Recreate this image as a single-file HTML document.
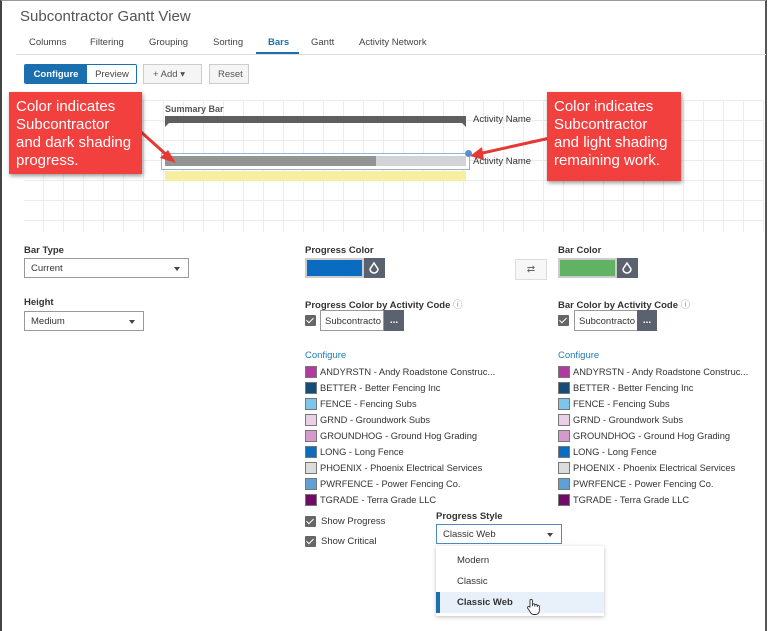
<!DOCTYPE html>
<html><head><style>
*{margin:0;padding:0;box-sizing:border-box}
body{width:768px;height:631px;background:#fff;font-family:"Liberation Sans",sans-serif;color:#333;position:relative;overflow:hidden;font-size:10px}
.a{position:absolute}
.border{position:absolute;left:0;top:0;width:767px;height:631px;border-left:2px solid #444;border-right:2px solid #555;border-top:1px solid #999}
.tab{position:absolute;top:37px;font-size:9.5px;color:#444}
.grid{position:absolute;left:24px;top:100px;width:740px;height:132px;
background-image:linear-gradient(to right,#ececec 1px,transparent 1px),linear-gradient(to bottom,#ececec 1px,transparent 1px);
background-size:20px 20px;background-position:19px 0,0 0}
.callout{position:absolute;background:#f2403f;color:#fff;font-size:15px;line-height:18px;padding:6px 7px;box-shadow:1px 2px 4px rgba(0,0,0,.4)}
.lbl{position:absolute;font-size:9.5px;font-weight:bold;color:#333}
.sel{position:absolute;height:20px;border:1px solid #999;background:#fff;font-size:9.5px;padding:4px 6px;color:#333}
.sel:after{content:"";position:absolute;right:8px;top:8px;border-left:3px solid transparent;border-right:3px solid transparent;border-top:4px solid #444}
.item{position:absolute;font-size:9.3px;color:#333;height:12px;line-height:12px;white-space:nowrap}
.sw{display:inline-block;width:12px;height:12px;vertical-align:top;margin-right:3px;border:1px solid #777}
.cb{position:absolute;width:11px;height:11px;background:#666;border-radius:1px}
.cb:after{content:"";position:absolute;left:3px;top:1px;width:3px;height:6px;border:solid #fff;border-width:0 1.5px 1.5px 0;transform:rotate(45deg)}
.pick{position:absolute;width:21px;height:20px;background:#5a6270}
</style></head><body>
<div class="border"></div>
<div class="a" style="left:20px;top:8px;font-size:15px;color:#555">Subcontractor Gantt View</div>
<div class="tab" style="left:29px">Columns</div>
<div class="tab" style="left:90px">Filtering</div>
<div class="tab" style="left:149px">Grouping</div>
<div class="tab" style="left:213px">Sorting</div>
<div class="tab" style="left:268px;color:#1a6fae;font-weight:bold">Bars</div>
<div class="tab" style="left:311px">Gantt</div>
<div class="tab" style="left:359px">Activity Network</div>
<div class="a" style="left:16px;top:54px;width:750px;height:1px;background:#ddd"></div>
<div class="a" style="left:256px;top:52px;width:43px;height:2px;background:#1a6fae"></div>
<div class="a" style="left:24px;top:64px;width:113px;height:20px;border:1px solid #1a6fae;border-radius:2px;overflow:hidden">
 <div class="a" style="left:0;top:0;width:62px;height:18px;background:#1a6fae;color:#fff;font-weight:bold;font-size:9.5px;padding-top:4px;text-align:center">Configure</div>
 <div class="a" style="left:62px;top:0;width:50px;height:18px;color:#444;font-size:9.5px;padding-top:4px;text-align:center">Preview</div>
</div>
<div class="a" style="left:143px;top:64px;width:59px;height:20px;border:1px solid #ccc;background:#f5f5f5;font-size:9.5px;color:#555;padding:4px 0 0 9px">+ Add ▾</div>
<div class="a" style="left:209px;top:64px;width:40px;height:20px;border:1px solid #ccc;background:#f5f5f5;font-size:9.5px;color:#555;padding:4px 0 0 8px">Reset</div>

<div class="grid"></div>
<div class="a" style="left:165px;top:104px;font-size:9px;font-weight:bold;color:#555">Summary Bar</div>
<div class="a" style="left:165px;top:116px;width:301px;height:7px;background:#5f5f5f"></div>
<div class="a" style="left:165px;top:123px;width:0;height:0;border-top:4px solid #5f5f5f;border-right:4px solid transparent"></div>
<div class="a" style="left:462px;top:123px;width:0;height:0;border-top:4px solid #5f5f5f;border-left:4px solid transparent"></div>
<div class="a" style="left:473px;top:114px;font-size:9.5px;color:#333">Activity Name</div>
<div class="a" style="left:161px;top:153px;width:309px;height:17px;border:1px solid #8fb6d6;background:#fff"></div>
<div class="a" style="left:165px;top:156px;width:301px;height:10px;background:#d3d3d7"></div>
<div class="a" style="left:165px;top:156px;width:211px;height:10px;background:#949494"></div>
<div class="a" style="left:465px;top:150px;width:7px;height:7px;border-radius:50%;background:#5b8fd0"></div>
<div class="a" style="left:165px;top:171px;width:301px;height:10px;background:#f8eea0"></div>
<div class="a" style="left:473px;top:156px;font-size:9.5px;color:#333">Activity Name</div>

<svg class="a" style="left:0;top:0" width="768" height="240">
 <line x1="140" y1="131" x2="170" y2="158" stroke="#e53935" stroke-width="3"/>
 <polygon points="176,163 160,158 168,150" fill="#e53935"/>
 <line x1="550" y1="138" x2="478" y2="154" stroke="#e53935" stroke-width="3"/>
 <polygon points="470,156 482,147 484,160" fill="#e53935"/>
</svg>
<div class="callout" style="left:9px;top:92px;width:133px;height:82px">Color indicates Subcontractor and dark shading progress.</div>
<div class="callout" style="left:547px;top:92px;width:134px;height:89px">Color indicates Subcontractor and light shading remaining work.</div>

<div class="lbl" style="left:24px;top:245px">Bar Type</div>
<div class="sel" style="left:24px;top:258px;width:165px">Current</div>
<div class="lbl" style="left:24px;top:297px">Height</div>
<div class="sel" style="left:24px;top:311px;width:120px">Medium</div>

<div class="lbl" style="left:305px;top:245px">Progress Color</div>
<div class="a" style="left:305px;top:258px;width:59px;height:20px;border:2px solid #ccc;background:#0a6cc0"></div>
<div class="pick" style="left:364px;top:258px"><svg width="21" height="20"><path d="M10 5 L14 11 A4 4 0 0 1 6 11 Z" fill="none" stroke="#fff" stroke-width="1.5"/></svg></div>
<div class="a" style="left:515px;top:259px;width:32px;height:21px;border:1px solid #ddd;background:#f7f7f7;color:#666;font-size:10px;text-align:center;padding-top:4px">⇄</div>
<div class="lbl" style="left:558px;top:245px">Bar Color</div>
<div class="a" style="left:558px;top:258px;width:59px;height:20px;border:2px solid #ccc;background:#61b262"></div>
<div class="pick" style="left:617px;top:258px"><svg width="21" height="20"><path d="M10 5 L14 11 A4 4 0 0 1 6 11 Z" fill="none" stroke="#fff" stroke-width="1.5"/></svg></div>

<div class="lbl" style="left:305px;top:297px">Progress Color by Activity Code <span style="font-weight:normal;color:#888">ⓘ</span></div>
<div class="cb" style="left:305px;top:315px"></div>
<div class="a" style="left:320px;top:310px;width:64px;height:21px;border:1px solid #999;font-size:9.5px;padding:5px 4px;overflow:hidden;white-space:nowrap">Subcontracto</div>
<div class="a" style="left:384px;top:310px;width:20px;height:21px;background:#5a6270;color:#fff;font-weight:bold;text-align:center;font-size:10px;padding-top:5px">...</div>
<div class="lbl" style="left:558px;top:297px">Bar Color by Activity Code <span style="font-weight:normal;color:#888">ⓘ</span></div>
<div class="cb" style="left:558px;top:315px"></div>
<div class="a" style="left:574px;top:310px;width:64px;height:21px;border:1px solid #999;font-size:9.5px;padding:5px 4px;overflow:hidden;white-space:nowrap">Subcontracto</div>
<div class="a" style="left:637px;top:310px;width:20px;height:21px;background:#5a6270;color:#fff;font-weight:bold;text-align:center;font-size:10px;padding-top:5px">...</div>

<div class="a" style="left:305px;top:350px;color:#1f7ab8;font-size:9.5px">Configure</div>
<div class="a" style="left:558px;top:350px;color:#1f7ab8;font-size:9.5px">Configure</div>

<div class="item" style="left:305px;top:366px"><span class="sw" style="background:#b03aa0"></span>ANDYRSTN - Andy Roadstone Construc...</div>
<div class="item" style="left:305px;top:382px"><span class="sw" style="background:#154d78"></span>BETTER - Better Fencing Inc</div>
<div class="item" style="left:305px;top:398px"><span class="sw" style="background:#7cc6ec"></span>FENCE - Fencing Subs</div>
<div class="item" style="left:305px;top:414px"><span class="sw" style="background:#ead0e6"></span>GRND - Groundwork Subs</div>
<div class="item" style="left:305px;top:430px"><span class="sw" style="background:#d49acb"></span>GROUNDHOG - Ground Hog Grading</div>
<div class="item" style="left:305px;top:446px"><span class="sw" style="background:#0c6cc0"></span>LONG - Long Fence</div>
<div class="item" style="left:305px;top:462px"><span class="sw" style="background:#dcdcdc"></span>PHOENIX - Phoenix Electrical Services</div>
<div class="item" style="left:305px;top:478px"><span class="sw" style="background:#5fa0d6"></span>PWRFENCE - Power Fencing Co.</div>
<div class="item" style="left:305px;top:494px"><span class="sw" style="background:#700c64"></span>TGRADE - Terra Grade LLC</div>

<div class="item" style="left:558px;top:366px"><span class="sw" style="background:#b03aa0"></span>ANDYRSTN - Andy Roadstone Construc...</div>
<div class="item" style="left:558px;top:382px"><span class="sw" style="background:#154d78"></span>BETTER - Better Fencing Inc</div>
<div class="item" style="left:558px;top:398px"><span class="sw" style="background:#7cc6ec"></span>FENCE - Fencing Subs</div>
<div class="item" style="left:558px;top:414px"><span class="sw" style="background:#ead0e6"></span>GRND - Groundwork Subs</div>
<div class="item" style="left:558px;top:430px"><span class="sw" style="background:#d49acb"></span>GROUNDHOG - Ground Hog Grading</div>
<div class="item" style="left:558px;top:446px"><span class="sw" style="background:#0c6cc0"></span>LONG - Long Fence</div>
<div class="item" style="left:558px;top:462px"><span class="sw" style="background:#dcdcdc"></span>PHOENIX - Phoenix Electrical Services</div>
<div class="item" style="left:558px;top:478px"><span class="sw" style="background:#5fa0d6"></span>PWRFENCE - Power Fencing Co.</div>
<div class="item" style="left:558px;top:494px"><span class="sw" style="background:#700c64"></span>TGRADE - Terra Grade LLC</div>

<div class="cb" style="left:305px;top:516px"></div>
<div class="a" style="left:321px;top:516px;font-size:9.5px">Show Progress</div>
<div class="cb" style="left:305px;top:536px"></div>
<div class="a" style="left:321px;top:536px;font-size:9.5px">Show Critical</div>

<div class="lbl" style="left:436px;top:511px">Progress Style</div>
<div class="sel" style="left:436px;top:524px;width:126px;border-color:#4b8cc5">Classic Web</div>
<div class="a" style="left:436px;top:546px;width:168px;height:70px;background:#fff;box-shadow:0 1px 4px rgba(0,0,0,.25)">
 <div class="a" style="left:21px;top:9px;font-size:9.5px">Modern</div>
 <div class="a" style="left:21px;top:30px;font-size:9.5px">Classic</div>
 <div class="a" style="left:0;top:46px;width:168px;height:21px;background:#e8f1fa;border-left:4px solid #1a6fae"></div>
 <div class="a" style="left:21px;top:51px;font-size:9.5px;font-weight:bold">Classic Web</div>
 <svg class="a" style="left:90px;top:52px" width="14" height="18"><path d="M4 9 V2.5 a1.2 1.2 0 0 1 2.4 0 V8 M6.4 7 a1.2 1.2 0 0 1 2.4 0 V8.5 M8.8 7.5 a1.2 1.2 0 0 1 2.4 0 V9 M11.2 8.5 a1.1 1.1 0 0 1 2.2 0 V12 Q13.4 16 10 16.5 H7 Q5 16 3 12 L1.5 10 a1.2 1.2 0 0 1 2 -1.2 L4 9.5" fill="#fff" stroke="#333" stroke-width="0.9"/></svg>
</div>
</body></html>
